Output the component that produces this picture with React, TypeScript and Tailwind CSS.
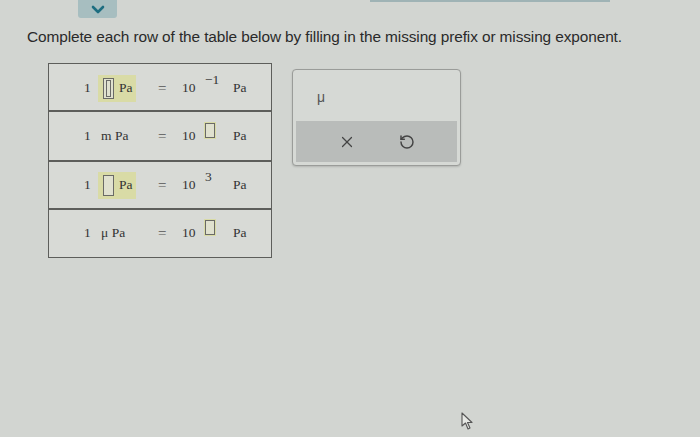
import { RotateCcw, X } from 'lucide-react'

function Box({ focused = false }: { focused?: boolean }) {
  return (
    <span className="inline-flex h-[21px] w-[11px] items-center justify-center border border-[#6a6a66] bg-[#e0e1cf]">
      {focused && <span className="h-[17px] w-[5px] border border-[#6a6a66]" />}
    </span>
  )
}

function Row({
  prefix,
  exponent,
  prefixBox,
  expBox,
  focused,
  last,
  h,
}: {
  prefix?: string
  exponent?: string
  prefixBox?: boolean
  expBox?: boolean
  focused?: boolean
  last?: boolean
  h: string
}) {
  return (
    <div className={`flex items-center pl-[35px] ${h} ${last ? '' : 'border-b-2 border-[#5d5e5b]'}`}>
      <div className="flex w-[74px] items-center">
        <span className="w-[14px]">1</span>
        {prefixBox ? (
          <span className="flex items-center gap-[5px] bg-[#d9dba6] py-[3px] pl-[5px] pr-[3px]">
            <Box focused={focused} />
            <span>Pa</span>
          </span>
        ) : (
          <span className="pl-[3px]">{prefix} Pa</span>
        )}
      </div>
      <span className="w-[24px] text-[15px] text-[#555]">=</span>
      <div className="flex w-[51px] items-center">
        <span className="w-[22px]">10</span>
        {expBox ? (
          <span className="-mt-[12px] bg-[#d9dba6] px-[1px] py-[1px]">
            <span className="flex h-[15px] w-[10px] border border-[#6a6a66] bg-[#e0e1cf]" />
          </span>
        ) : (
          <span className="-mt-[16px] pl-[1px]">{exponent}</span>
        )}
      </div>
      <span>Pa</span>
    </div>
  )
}

export default function App() {
  return (
    <div className="relative h-[437px] w-[700px] overflow-hidden bg-[#d2d5d1] font-['Liberation_Sans',sans-serif] text-[#2b2b2b]">
      <div className="flex items-start">
        <div className="ml-[78px] flex h-[18px] w-[39px] items-center justify-center rounded-b-[3px] bg-[#a7bec0]">
          <svg width="14" height="9" viewBox="0 0 14 9">
            <path d="M2 2 L7 7 L12 2" stroke="#1c6d80" strokeWidth="2.6" fill="none" strokeLinecap="round" strokeLinejoin="round" />
          </svg>
        </div>
        <div className="ml-[253px] h-[2px] w-[240px] bg-[#9fb3b5]" />
      </div>

      <p className="ml-[27px] mt-[10px] text-[15.4px] leading-[18px] tracking-[-0.1px] text-[#2a2a2a]">
        Complete each row of the table below by filling in the missing prefix or missing exponent.
      </p>

      <div className="ml-[48px] mt-[17px] flex items-start">
        <div className="w-[224px] border border-[#5d5e5b] bg-[#d8dad6] pt-[2px] font-['Liberation_Serif',serif] text-[13.5px] text-[#333]">
          <Row prefixBox focused exponent="−1" h="h-[46px]" />
          <Row prefix="m" expBox h="h-[50px]" />
          <Row prefixBox exponent="3" h="h-[48px]" />
          <Row prefix="μ" expBox last h="h-[47px]" />
        </div>

        <div className="ml-[20px] mt-[6px] h-[97px] w-[169px] rounded-[4px] border border-[#9a9c99] bg-[#d6d9d5] p-[3px] shadow-[0_1px_2px_rgba(0,0,0,0.15)]">
          <div className="flex h-[48px] items-start pl-[21px] pt-[14px] text-[14px] text-[#555]">μ</div>
          <div className="flex h-[41px] items-center justify-around bg-[#b9bcba] px-[20px] text-[#444]">
            <X size={18} strokeWidth={1.6} />
            <RotateCcw size={16} strokeWidth={2.2} />
          </div>
        </div>
      </div>

      <svg className="absolute left-[461px] top-[412px]" width="14" height="18" viewBox="0 0 14 18">
        <path d="M1 1 L1 14 L4.5 11 L7 17 L9 16 L6.5 10.5 L11 10.5 Z" fill="#e6e8e4" stroke="#555" strokeWidth="1.1" strokeLinejoin="round" />
      </svg>
    </div>
  )
}
